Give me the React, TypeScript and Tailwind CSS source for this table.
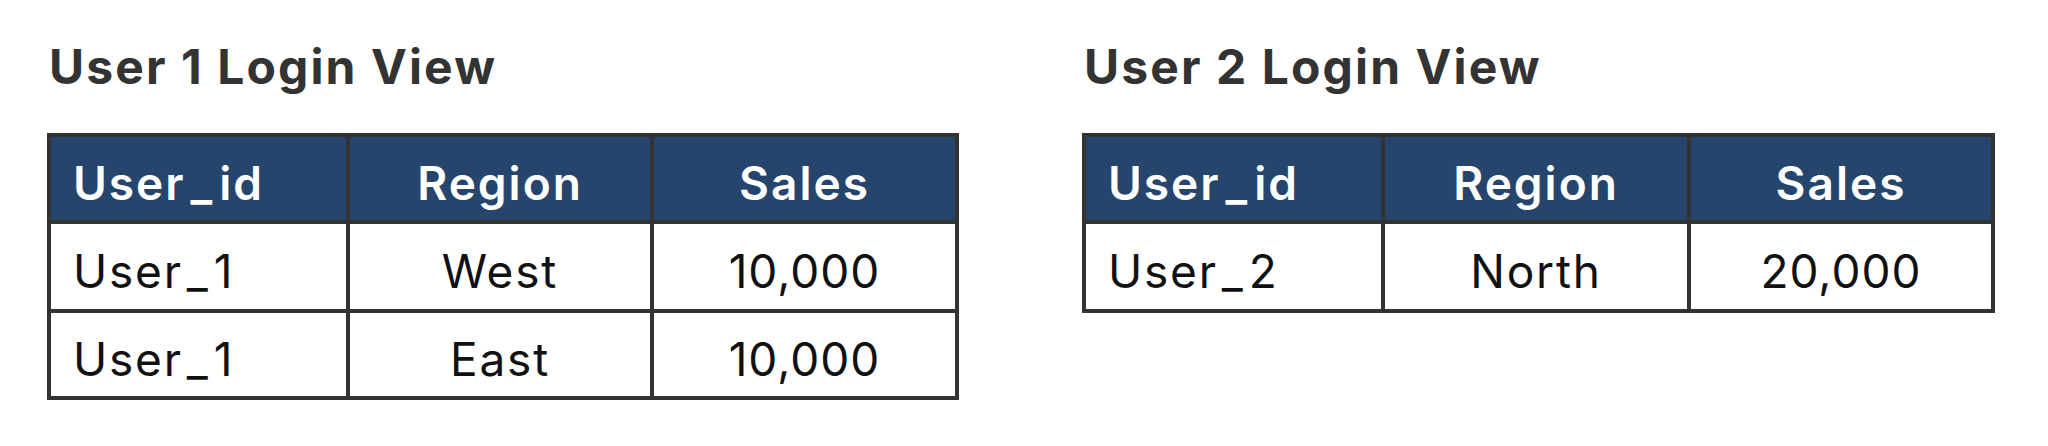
import React from "react";

type Row = [string, string, string];

function Txt({ s, gap }: { s: string; gap: string }) {
  const parts = s.split("_");
  if (parts.length === 1) return <>{s}</>;
  return (
    <>
      {parts[0]}
      <span className={gap}>_</span>
      {parts[1]}
    </>
  );
}

function DataTable({ rows, cols }: { rows: Row[]; cols: string }) {
  return (
    <div className={`grid ${cols} gap-[4px] bg-[#333333] p-[4px]`}>
      {["User_id", "Region", "Sales"].map((h, i) => (
        <div
          key={h}
          className={`h-[83px] bg-[#26456d] text-white font-semibold text-[46px] leading-[56px] tracking-[2px] flex items-center pt-[8px] ${
            i === 0 ? "justify-start pl-[22px]" : "justify-center"
          }`}
        >
          <Txt s={h} gap="mx-[5px]" />
        </div>
      ))}
      {rows.map((r, ri) =>
        r.map((c, ci) => (
          <div
            key={`${ri}-${ci}`}
            className={`${ri === 0 ? "h-[85px]" : "h-[83px]"} bg-white text-[#111111] font-normal text-[46px] leading-[56px] ${
              ci === 2 ? "tracking-[1px]" : "tracking-[1.8px]"
            } flex items-center pt-[8px] ${
              ci === 0 ? "justify-start pl-[22px]" : "justify-center"
            }`}
          >
            <Txt s={c} gap="mx-[4px]" />
          </div>
        ))
      )}
    </div>
  );
}

export default function App() {
  return (
    <div
      className="w-[2048px] h-[446px] bg-white flex items-start pt-[38px]"
      style={{ fontFamily: "Inter, 'Noto Sans', sans-serif" }}
    >
      <div className="ml-[47px] w-[912px] flex flex-col">
        <h2 className="text-[48px] leading-[58px] font-bold text-[#333333] tracking-[2.1px] pl-[2px] mb-[37px]">
          User 1 Login View
        </h2>
        <DataTable
          cols="grid-cols-[295px_300px_301px]"
          rows={[
            ["User_1", "West", "10,000"],
            ["User_1", "East", "10,000"],
          ]}
        />
      </div>
      <div className="ml-[123px] w-[913px] flex flex-col">
        <h2 className="text-[48px] leading-[58px] font-bold text-[#333333] tracking-[2.1px] pl-[2px] mb-[37px]">
          User 2 Login View
        </h2>
        <DataTable
          cols="grid-cols-[295px_302px_300px]"
          rows={[["User_2", "North", "20,000"]]}
        />
      </div>
    </div>
  );
}
